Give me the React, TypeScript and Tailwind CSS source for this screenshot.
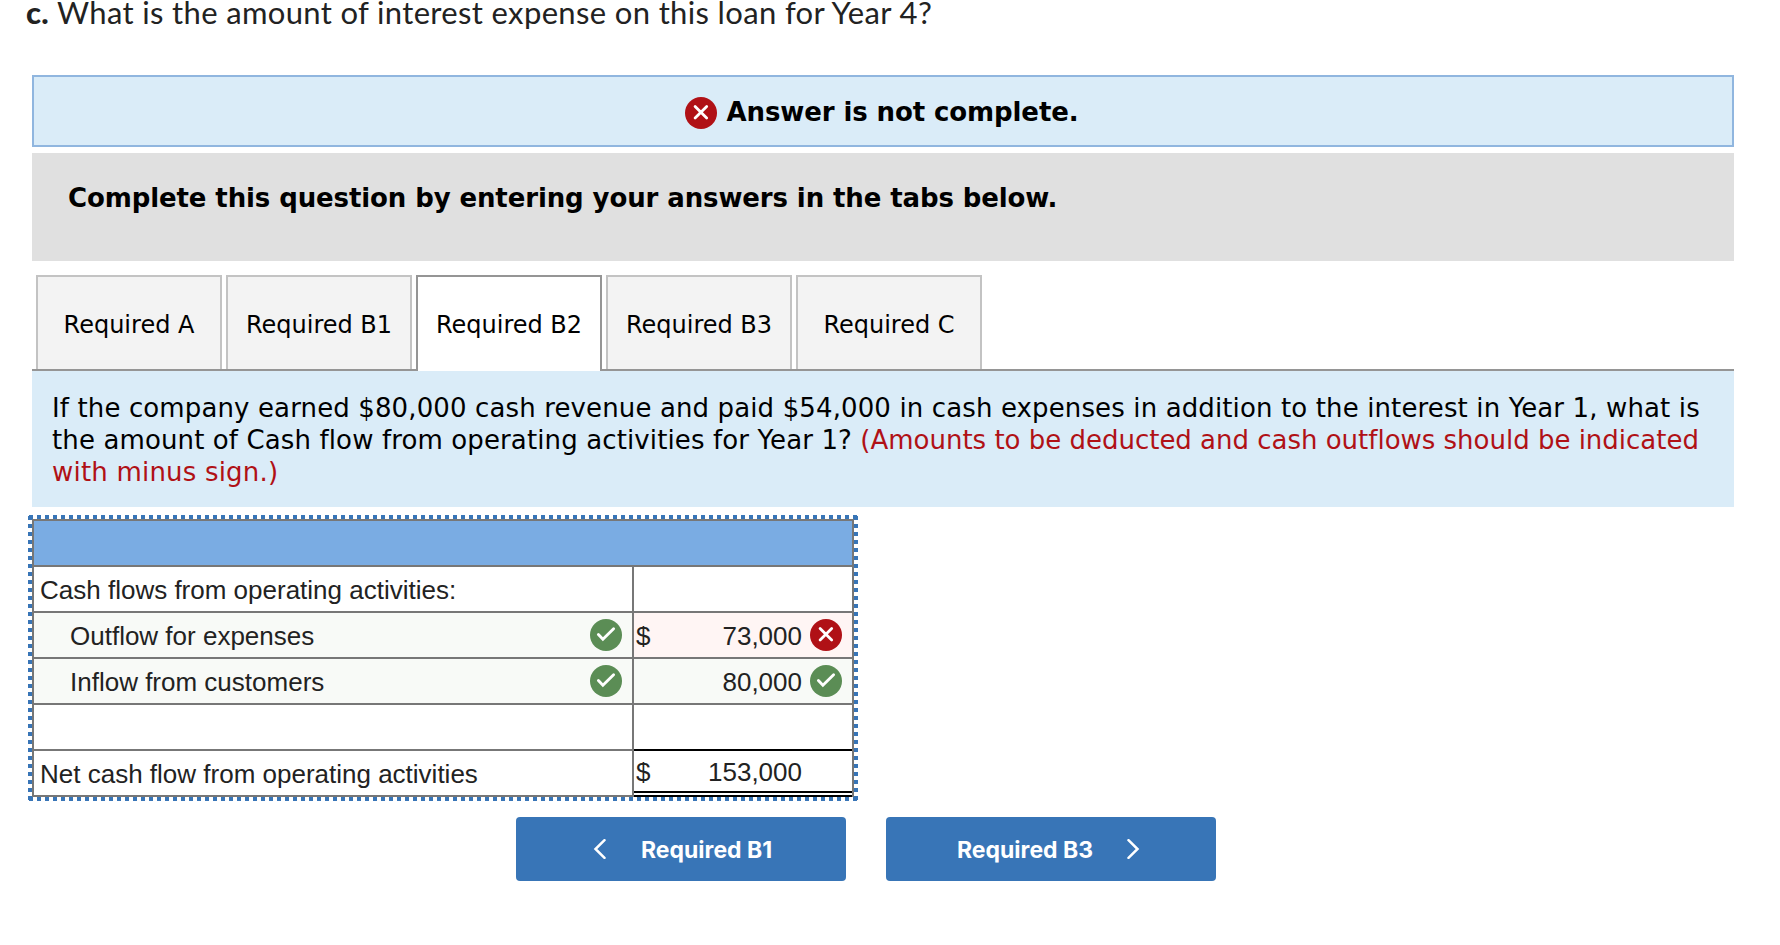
import type { ReactNode } from "react";

const verdana = "font-['Verdana','DejaVu_Sans',sans-serif]";

function CheckIcon({ className = "" }: { className?: string }) {
  return (
    <svg viewBox="0 0 32 32" className={`size-8 shrink-0 ${className}`}>
      <circle cx="16" cy="16" r="16" fill="#5b8d55" />
      <path d="M8.4 15.6 L12.9 20.2 L23.6 9.8" fill="none" stroke="#fff" strokeWidth="2.9" strokeLinecap="round" strokeLinejoin="miter" />
    </svg>
  );
}

function CrossIcon({ className = "" }: { className?: string }) {
  return (
    <svg viewBox="0 0 32 32" className={`size-8 shrink-0 ${className}`}>
      <circle cx="16" cy="16" r="16" fill="#b01116" />
      <path d="M10.1 9.4 L21.7 21 M21.7 9.4 L10.1 21" fill="none" stroke="#fff" strokeWidth="2.8" strokeLinecap="round" />
    </svg>
  );
}

const tabs = ["Required A", "Required B1", "Required B2", "Required B3", "Required C"];

function Row({ label, indent, labelOk, children, tone = "bg-white" }: { label?: string; indent?: boolean; labelOk?: boolean; children?: ReactNode; tone?: string }) {
  return (
    <div className="flex h-[46px] border-b-2 border-[#777777]">
      <div className={`flex w-[600px] items-center border-r-2 border-[#777777] pt-px pr-2.5 ${indent ? "bg-[#f8faf7] pl-9" : "pl-1.5"}`}>
        <span className="whitespace-nowrap">{label}</span>
        {labelOk && <CheckIcon className="-mt-px ml-auto" />}
      </div>
      <div className={`flex w-[218px] items-center pt-px pr-2.5 pl-0.5 ${tone}`}>{children}</div>
    </div>
  );
}

export default function App() {
  return (
    <div className="h-[945px] w-full overflow-hidden bg-white">
      <div className="h-[75px] pl-[26px] font-['Lato',sans-serif] text-[31px] leading-[24px] tracking-[0.35px] whitespace-nowrap text-[#222]">
        <b className="font-black">c.</b> What is the amount of interest expense on this loan for Year 4?
      </div>

      <div className="ml-8 w-[1702px]">
        <div className={`flex h-[72px] items-center justify-center gap-[9px] border-2 border-[#90b6df] bg-[#daecf8] pr-0.5 text-[26px] font-bold tracking-[-0.1px] text-black ${verdana}`}>
          <CrossIcon className="mt-1" />
          <span className="pt-0.5 whitespace-nowrap">Answer is not complete.</span>
        </div>

        <div className={`mt-1.5 h-[108px] bg-[#e0e0e0] pt-[25px] pl-9 text-[26px] leading-10 font-bold tracking-[-0.11px] whitespace-nowrap text-black ${verdana}`}>
          Complete this question by entering your answers in the tabs below.
        </div>

        <div className={`mt-3.5 flex h-24 gap-1 border-b-2 border-[#959595] pl-1 text-[24px] text-black ${verdana}`}>
          {tabs.map((tab) => (
            <div
              key={tab}
              className={`flex w-[186px] items-center justify-center border-2 border-b-0 pt-1 whitespace-nowrap ${
                tab === "Required B2" ? "-mb-0.5 border-[#959595] bg-white pb-0.5" : "border-[#c3c3c3] bg-[#f3f3f3]"
              }`}
            >
              {tab}
            </div>
          ))}
        </div>

        <div className={`h-[136px] bg-[#daecf8] pt-[21px] pl-5 text-[26px] leading-8 whitespace-nowrap text-black ${verdana}`}>
          <div className="tracking-[0.125px]">
            If the company earned $80,000 cash revenue and paid $54,000 in cash expenses in addition to the interest in Year 1, what is
          </div>
          <div className="tracking-[0.12px]">
            the amount of Cash flow from operating activities for Year 1?{" "}
            <span className="tracking-[-0.01px] text-[#b01116]">(Amounts to be deducted and cash outflows should be indicated</span>
          </div>
          <div className="tracking-[0.2px] text-[#b01116]">with minus sign.)</div>
        </div>
      </div>

      <div className="mt-2 ml-7 w-[830px] bg-[linear-gradient(90deg,#3875b7_4px,transparent_4px),linear-gradient(90deg,#3875b7_4px,transparent_4px),linear-gradient(180deg,#3875b7_4px,transparent_4px),linear-gradient(180deg,#3875b7_4px,transparent_4px)] bg-[size:8px_4px,8px_4px,4px_8px,4px_8px] bg-[position:1px_0,1px_100%,0_1px,100%_1px] p-1 [background-repeat:repeat-x,repeat-x,repeat-y,repeat-y]">
        <div className="h-[278px] border-2 border-b-0 border-[#777777] bg-white font-['Liberation_Sans',sans-serif] text-[26px] leading-8 text-[#222]">
          <div className="h-[46px] border-b-2 border-[#777777] bg-[#7aace3]" />
          <Row label="Cash flows from operating activities:" />
          <Row label="Outflow for expenses" indent labelOk tone="bg-[#fff5f4]">
            <span>$</span>
            <span className="mr-2 ml-auto">73,000</span>
            <CrossIcon className="-mt-px" />
          </Row>
          <Row label="Inflow from customers" indent labelOk tone="bg-[#f8faf7]">
            <span className="mr-2 ml-auto">80,000</span>
            <CheckIcon className="-mt-px" />
          </Row>
          <Row />
          <div className="flex h-[46px]">
            <div className="flex w-[600px] items-center border-r-2 border-b-2 border-[#777777] pt-px pl-1.5 whitespace-nowrap">
              Net cash flow from operating activities
            </div>
            <div className="-mt-0.5 flex w-[218px] flex-col border-t-2 border-b-2 border-black">
              <div className="flex h-[42px] items-center border-b-2 border-black pt-0.5 pr-[50px] pl-0.5">
                <span>$</span>
                <span className="ml-auto">153,000</span>
              </div>
            </div>
          </div>
        </div>
      </div>

      <div className="mt-4 ml-[516px] flex gap-10 font-['Inter',sans-serif] text-[23px] font-bold text-white">
        <button className="flex h-16 w-[330px] items-center gap-[35px] rounded bg-[#3875b7] pl-[77px]">
          <svg viewBox="0 0 13 20" className="h-5 w-[13px]">
            <path d="M11.5 1.2 L2.5 10 L11.5 18.8" fill="none" stroke="#fff" strokeWidth="2.5" strokeLinecap="round" />
          </svg>
          <span className="pt-0.5">Required B1</span>
        </button>
        <button className="flex h-16 w-[330px] items-center gap-[35px] rounded bg-[#3875b7] pl-[71px]">
          <span className="w-[135px] pt-0.5 text-left whitespace-nowrap">Required B3</span>
          <svg viewBox="0 0 13 20" className="h-5 w-[13px]">
            <path d="M1.5 1.2 L10.5 10 L1.5 18.8" fill="none" stroke="#fff" strokeWidth="2.5" strokeLinecap="round" />
          </svg>
        </button>
      </div>
    </div>
  );
}
